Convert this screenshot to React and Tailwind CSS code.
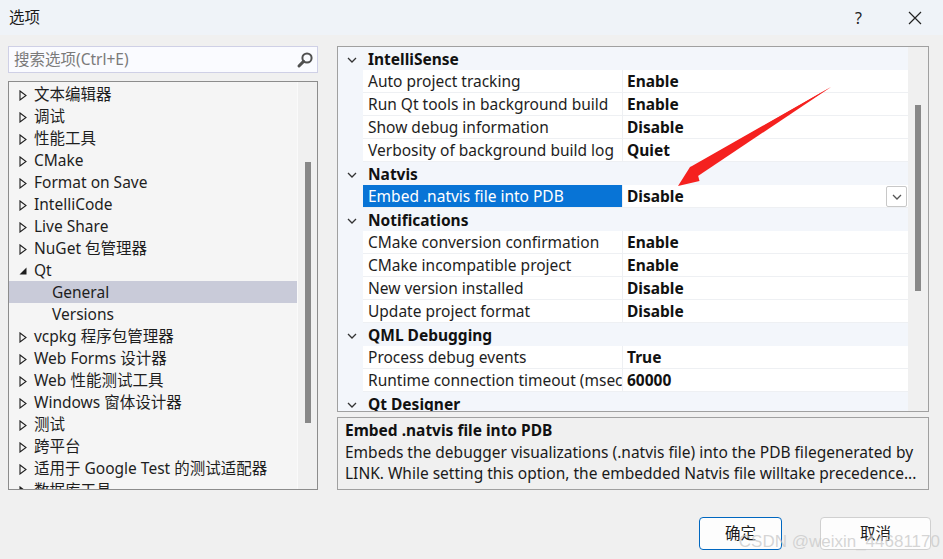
import React from 'react';

const FONT = "font-['Noto_Sans','Noto_Sans_CJK_SC',sans-serif]";

const treeItems = [
  { label: '文本编辑器', kind: 'closed' },
  { label: '调试', kind: 'closed' },
  { label: '性能工具', kind: 'closed' },
  { label: 'CMake', kind: 'closed' },
  { label: 'Format on Save', kind: 'closed' },
  { label: 'IntelliCode', kind: 'closed' },
  { label: 'Live Share', kind: 'closed' },
  { label: 'NuGet 包管理器', kind: 'closed' },
  { label: 'Qt', kind: 'open' },
  { label: 'General', kind: 'child', selected: true },
  { label: 'Versions', kind: 'child' },
  { label: 'vcpkg 程序包管理器', kind: 'closed' },
  { label: 'Web Forms 设计器', kind: 'closed' },
  { label: 'Web 性能测试工具', kind: 'closed' },
  { label: 'Windows 窗体设计器', kind: 'closed' },
  { label: '测试', kind: 'closed' },
  { label: '跨平台', kind: 'closed' },
  { label: '适用于 Google Test 的测试适配器', kind: 'closed' },
  { label: '数据库工具', kind: 'closed' },
];

const grid = [
  { cat: 'IntelliSense' },
  { name: 'Auto project tracking', value: 'Enable' },
  { name: 'Run Qt tools in background build', value: 'Enable' },
  { name: 'Show debug information', value: 'Disable' },
  { name: 'Verbosity of background build log', value: 'Quiet' },
  { cat: 'Natvis' },
  { name: 'Embed .natvis file into PDB', value: 'Disable', selected: true },
  { cat: 'Notifications' },
  { name: 'CMake conversion confirmation', value: 'Enable' },
  { name: 'CMake incompatible project', value: 'Enable' },
  { name: 'New version installed', value: 'Disable' },
  { name: 'Update project format', value: 'Disable' },
  { cat: 'QML Debugging' },
  { name: 'Process debug events', value: 'True' },
  { name: 'Runtime connection timeout (msec)', value: '60000' },
  { cat: 'Qt Designer' },
];

const ClosedTri = () => (
  <svg width="8" height="11" viewBox="0 0 8 11" className="shrink-0">
    <path d="M1 1 L7 5.5 L1 10 Z" fill="none" stroke="#1e1e1e" strokeWidth="1.1" />
  </svg>
);

const OpenTri = () => (
  <svg width="8" height="8" viewBox="0 0 8 8" className="shrink-0">
    <path d="M7.5 0.5 L7.5 7.5 L0.5 7.5 Z" fill="#1e1e1e" />
  </svg>
);

const Chevron = ({ color = '#444' }) => (
  <svg width="10" height="6" viewBox="0 0 10 6">
    <path d="M1 1 L5 5 L9 1" fill="none" stroke={color} strokeWidth="1.3" />
  </svg>
);

const TreeRow = ({ item }) => (
  <div className={`h-[22px] flex items-center shrink-0 pt-[2px] ${item.selected ? 'bg-[#c9cbd9]' : ''}`}>
    {item.kind === 'child' ? (
      <span className="pl-[43px] text-[15.5px] text-[#1e1e1e] leading-none">{item.label}</span>
    ) : (
      <>
        <div className="w-[25px] pl-[10px] flex items-center">
          {item.kind === 'open' ? <OpenTri /> : <ClosedTri />}
        </div>
        <span className="text-[15.5px] text-[#1e1e1e] leading-none whitespace-nowrap">{item.label}</span>
      </>
    )}
  </div>
);

const GridRow = ({ row }) => {
  if (row.cat) {
    return (
      <div className="h-[23px] flex items-center bg-[#f3f6fb] shrink-0 pt-[2px]">
        <div className="w-[26px] flex justify-center pl-[1px]">
          <Chevron color="#333" />
        </div>
        <span className="pl-[4px] text-[15.5px] font-bold text-[#111] leading-none">{row.cat}</span>
      </div>
    );
  }
  return (
    <div className="h-[23px] flex bg-[#f3f6fb] shrink-0">
      <div className="w-[25px] shrink-0" />
      <div
        className={`w-[259px] shrink-0 flex items-center pl-[5px] pt-[2px] overflow-hidden whitespace-nowrap text-[15.5px] leading-none border-b border-[#eef0f3] ${
          row.selected ? 'bg-[#0874d6] text-white' : 'bg-white text-[#1e1e1e]'
        }`}
      >
        {row.name}
      </div>
      <div className="flex-1 flex items-center bg-white border-l border-b border-[#eef0f3] pl-[4px] pt-[2px] relative">
        <span className="text-[15.5px] font-bold text-[#111] leading-none">{row.value}</span>
        {row.selected && (
          <div className="absolute right-[1px] top-[1px] w-[21px] h-[21px] border border-[#c8c8c8] rounded-[2px] bg-white flex items-center justify-center">
            <Chevron color="#555" />
          </div>
        )}
      </div>
    </div>
  );
};

export default function App() {
  return (
    <div className={`relative w-[943px] h-[559px] bg-[#f0f0f0] flex flex-col overflow-hidden ${FONT}`}>
      {/* Title bar */}
      <div className="h-[35px] bg-[#eff3f8] flex items-center shrink-0">
        <span className="pl-[9px] text-[15.5px] text-[#1a1a1a]">选项</span>
        <div className="ml-auto flex items-center">
          <span className="text-[16px] text-[#222] mr-[46px]">?</span>
          <svg width="14" height="14" viewBox="0 0 14 14" className="mr-[21px]">
            <path d="M1 1 L13 13 M13 1 L1 13" stroke="#222" strokeWidth="1.2" />
          </svg>
        </div>
      </div>

      {/* Body */}
      <div className="flex pl-[8px] pr-[14px] pt-[11px] gap-[19px]">
        {/* Left column */}
        <div className="w-[310px] flex flex-col gap-[8px]">
          <div className="h-[27px] bg-[#fafbff] border border-[#cfd0e6] flex items-center pl-[5px] pr-[3px]">
            <span className="text-[15.5px] text-[#7a7a7a]">搜索选项(Ctrl+E)</span>
            <svg width="18" height="18" viewBox="0 0 18 18" className="ml-auto">
              <circle cx="11" cy="7" r="4.6" fill="none" stroke="#505050" strokeWidth="2" />
              <path d="M7.6 10.4 L3 15" stroke="#505050" strokeWidth="3" strokeLinecap="round" />
            </svg>
          </div>
          <div className="h-[409px] border border-[#8c8c8c] bg-[#f5f5f5] flex overflow-hidden">
            <div className="flex-1 flex flex-col pt-[1px] overflow-hidden">
              {treeItems.map((item) => (
                <TreeRow key={item.label} item={item} />
              ))}
            </div>
            <div className="w-[20px] border-l border-[#fafafa] bg-[#f0f0f0] pt-[80px] flex justify-center">
              <div className="w-[6px] h-[261px] bg-[#888888]" />
            </div>
          </div>
        </div>

        {/* Right column */}
        <div className="flex-1 flex flex-col gap-[5px]">
          <div className="h-[366px] border border-[#a0a0a0] flex overflow-hidden">
            <div className="flex-1 flex flex-col overflow-hidden">
              {grid.map((row, i) => (
                <GridRow key={i} row={row} />
              ))}
            </div>
            <div className="w-[20px] bg-[#f0f0f0] pt-[58px] flex justify-center">
              <div className="w-[6px] h-[186px] bg-[#888888]" />
            </div>
          </div>
          <div className="h-[73px] border border-[#a0a0a0] px-[7px] text-[15.5px] text-[#1a1a1a] leading-[21px] overflow-hidden">
            <div className="font-bold text-[#111] leading-[24px]">Embed .natvis file into PDB</div>
            <div className="whitespace-nowrap">Embeds the debugger visualizations (.natvis file) into the PDB filegenerated by</div>
            <div className="whitespace-nowrap">LINK. While setting this option, the embedded Natvis file willtake precedence...</div>
          </div>
        </div>
      </div>

      {/* Buttons */}
      <div className="flex justify-end gap-[38px] pr-[12px] pt-[27px]">
        <button className="w-[83px] h-[33px] bg-[#fdfdfd] border border-[#0067c0] rounded-[4px] text-[15.5px] text-[#1a1a1a]">
          确定
        </button>
        <button className="w-[111px] h-[33px] bg-[#fdfdfd] border border-[#d0d0d0] rounded-[4px] text-[15.5px] text-[#1a1a1a]">
          取消
        </button>
      </div>

      {/* Watermark */}
      <div className="absolute right-[3px] bottom-[5px] text-[17px] text-[rgba(200,200,200,0.75)] font-['Liberation_Sans',sans-serif] pointer-events-none">
        CSDN @weixin_44681170
      </div>

      {/* Red annotation arrow */}
      <svg className="absolute left-0 top-0 pointer-events-none" width="943" height="559">
        <polygon points="831,87 697,171.5 699.5,181 678,186 690,167 692,166" fill="#f5211f" />
        <polygon points="831,87 690.5,168 696.5,177" fill="#f5211f" />
      </svg>
    </div>
  );
}
